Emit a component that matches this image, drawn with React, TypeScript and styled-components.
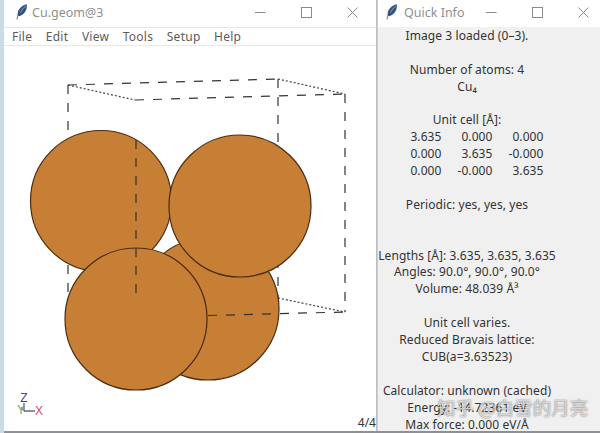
import React from "react";
import styled, { createGlobalStyle } from "styled-components";

const Global = createGlobalStyle`
  html, body { margin: 0; padding: 0; background: #c9dbe4; }
  #root { width: 600px; height: 433px; overflow: hidden; }
`;

const Desktop = styled.div`
  position: relative;
  width: 600px;
  height: 433px;
  display: flex;
  padding: 0 0 2px 4px;
  box-sizing: border-box;
  background: linear-gradient(90deg, #c9dbe4 0 4px, #8d9096 4px);
  font-family: "Noto Sans", "Open Sans", sans-serif;
  overflow: hidden;
`;

const Window = styled.section<{ $width: number; $bg: string }>`
  width: ${(p) => p.$width}px;
  flex: none;
  display: flex;
  flex-direction: column;
  background: ${(p) => p.$bg};
`;

const TitleBar = styled.header<{ $left: number; $right: number }>`
  height: 27px;
  flex: none;
  box-sizing: border-box;
  display: flex;
  align-items: center;
  background: #fff;
  padding: 0 ${(p) => p.$right}px 3px ${(p) => p.$left}px;
  color: #8f8f8f;
  font-size: 12.5px;
`;

const TitleText = styled.span<{ $gap: number }>`
  margin-left: ${(p) => p.$gap}px;
  flex: 1;
  white-space: nowrap;
`;

const WindowButtons = styled.div<{ $width: number }>`
  display: flex;
  width: ${(p) => p.$width}px;
  justify-content: space-between;
  align-items: center;
  flex: none;
`;

const MenuBar = styled.nav`
  height: 19px;
  flex: none;
  box-sizing: border-box;
  display: flex;
  align-items: center;
  border-top: 1px solid #e6e6e6;
  border-bottom: 1px solid #e8e8e8;
  padding: 0 0 1px 8px;
  gap: 13.6px;
  font-size: 12px;
  color: #5c5c5c;
  letter-spacing: 0.25px;
`;

const MenuItem = styled.span``;

const Canvas = styled.main`
  position: relative;
  flex: 1;
  min-height: 0;
  background: #fff;
`;

const Scene = styled.svg`
  display: block;
  width: 372px;
  height: 386px;
`;

const Counter = styled.span`
  position: absolute;
  right: 0;
  bottom: 0;
  font-size: 12px;
  line-height: 16px;
  color: #333;
`;

const Divider = styled.div`
  width: 2px;
  flex: none;
  background: linear-gradient(90deg, #b4b6b8, #d6d6d6);
`;

const InfoArea = styled.div`
  flex: 1;
  min-height: 0;
  background: #f0f0f0;
  overflow: hidden;
`;

const InfoBody = styled.div`
  width: 178px;
  padding-top: 1px;
  display: flex;
  flex-direction: column;
  align-items: center;
  font-size: 12px;
  letter-spacing: 0.08px;
  line-height: 16.9px;
  color: #333;
  white-space: nowrap;
`;

const InfoLine = styled.div<{ $before?: number }>`
  margin-top: ${(p) => (p.$before ?? 0) * 16.9}px;
  height: 16.9px;
`;

const Matrix = styled.div`
  display: grid;
  grid-template-columns: repeat(3, 51px);
  justify-items: end;
`;

const Watermark = styled.div`
  position: absolute;
  left: 437px;
  top: 397px;
  font-family: "Noto Sans CJK SC", sans-serif;
  font-size: 18.5px;
  line-height: 20px;
  color: rgba(255, 255, 255, 0.7);
  text-shadow: 0 0 1.5px rgba(50, 50, 50, 0.85);
  white-space: nowrap;
`;

const Feather = () => (
  <svg width="12" height="16" viewBox="0 0 12 16">
    <path d="M1 15.5 C1.5 12 2.5 9.5 4 7" stroke="#66728a" strokeWidth="1" fill="none" />
    <path d="M1.8 11.5 C0.8 6.5 5 1.5 10.8 0.3 C11.5 5.5 8.5 11 3 12.3 Z" fill="#34527e" />
    <path d="M4.5 8.5 C5.8 5.8 7.8 3.5 10 1.8" stroke="#a4b8d0" strokeWidth="0.8" fill="none" />
  </svg>
);

const Minimize = () => (
  <svg width="11" height="11" viewBox="0 0 11 11">
    <path d="M0 5.5H10.5" stroke="#8a8a8a" strokeWidth="1" />
  </svg>
);

const Maximize = () => (
  <svg width="11" height="11" viewBox="0 0 11 11">
    <rect x="0.5" y="0.5" width="10" height="10" fill="none" stroke="#8a8a8a" strokeWidth="1" />
  </svg>
);

const Close = () => (
  <svg width="11" height="11" viewBox="0 0 11 11">
    <path d="M0.5 0.5L10.5 10.5M10.5 0.5L0.5 10.5" stroke="#8a8a8a" strokeWidth="1" />
  </svg>
);

const Atom = ({ cx, cy, r }: { cx: number; cy: number; r: number }) => (
  <circle cx={cx} cy={cy} r={r} fill="#c67f34" stroke="#4a2c10" strokeWidth="1.2" />
);

/* Scene coordinates equal page coordinates minus (4, 46). */
const Dash = ({ d, dots }: { d: string; dots?: boolean }) => (
  <path
    d={d}
    fill="none"
    stroke={dots ? "#444" : "#333"}
    strokeWidth="1.2"
    strokeDasharray={dots ? "2 2" : "9 9"}
  />
);

const matrix = [
  ["3.635", "0.000", "0.000"],
  ["0.000", "3.635", "-0.000"],
  ["0.000", "-0.000", "3.635"],
];

const menus = ["File", "Edit", "View", "Tools", "Setup", "Help"];

export default function App() {
  return (
    <Desktop>
      <Global />
      <Window $width={372} $bg="#fff">
        <TitleBar $left={12} $right={18}>
          <Feather />
          <TitleText $gap={4}>Cu.geom@3</TitleText>
          <WindowButtons $width={103}>
            <Minimize />
            <Maximize />
            <Close />
          </WindowButtons>
        </TitleBar>
        <MenuBar>
          {menus.map((m) => (
            <MenuItem key={m}>{m}</MenuItem>
          ))}
        </MenuBar>
        <Canvas>
          <Scene viewBox="0 0 372 386">
            <Dash d="M64 39L274 33" />
            <Dash d="M131 54L341 48" />
            <Dash d="M64 39L131 54" dots />
            <Dash d="M274 33L341 48" dots />
            <Dash d="M64 39V250" />
            <Dash d="M274 33V252" />
            <Dash d="M341 48V266" />
            <Dash d="M274 252L341 266" dots />
            <Atom cx={204} cy={263} r={71} />
            <Dash d="M204 269.5L341 266" />
            <Atom cx={97} cy={155} r={70.5} />
            <Atom cx={236} cy={160} r={71} />
            <Dash d="M132 94V202" />
            <Atom cx={132} cy={273} r={71} />
            <Dash d="M132 202V256" />
            <path d="M20 365V357" stroke="#4a4a9a" strokeWidth="1.2" />
            <path d="M20 365H31" stroke="#404060" strokeWidth="1.2" />
            <path d="M20 365L17 361" stroke="#5a9a6a" strokeWidth="1.2" />
            <text x="20" y="356" textAnchor="middle" fontSize="12" fontFamily="Liberation Sans" fill="#4444aa">Z</text>
            <text x="17" y="368" textAnchor="middle" fontSize="12" fontFamily="Liberation Sans" fill="#66aa77">Y</text>
            <text x="35" y="369" textAnchor="middle" fontSize="12" fontFamily="Liberation Sans" fill="#dd4466">X</text>
          </Scene>
          <Counter>4/4</Counter>
        </Canvas>
      </Window>
      <Divider />
      <Window $width={222} $bg="#f0f0f0">
        <TitleBar $left={8} $right={11}>
          <Feather />
          <TitleText $gap={6}>Quick Info</TitleText>
          <WindowButtons $width={103}>
            <Minimize />
            <Maximize />
            <Close />
          </WindowButtons>
        </TitleBar>
        <InfoArea>
          <InfoBody>
            <InfoLine>Image 3 loaded (0–3).</InfoLine>
            <InfoLine $before={1}>Number of atoms: 4</InfoLine>
            <InfoLine>Cu₄</InfoLine>
            <InfoLine $before={1}>Unit cell [Å]:</InfoLine>
            <Matrix>
              {matrix.flat().map((v, i) => (
                <InfoLine key={i}>{v}</InfoLine>
              ))}
            </Matrix>
            <InfoLine $before={1}>Periodic: yes, yes, yes</InfoLine>
            <InfoLine $before={2}>Lengths [Å]: 3.635, 3.635, 3.635</InfoLine>
            <InfoLine>Angles: 90.0°, 90.0°, 90.0°</InfoLine>
            <InfoLine>Volume: 48.039 Å³</InfoLine>
            <InfoLine $before={1}>Unit cell varies.</InfoLine>
            <InfoLine>Reduced Bravais lattice:</InfoLine>
            <InfoLine>CUB(a=3.63523)</InfoLine>
            <InfoLine $before={1}>Calculator: unknown (cached)</InfoLine>
            <InfoLine>Energy: -14.72361 eV</InfoLine>
            <InfoLine>Max force: 0.000 eV/Å</InfoLine>
          </InfoBody>
        </InfoArea>
      </Window>
      <Watermark>知乎 @白雪的月亮</Watermark>
    </Desktop>
  );
}
